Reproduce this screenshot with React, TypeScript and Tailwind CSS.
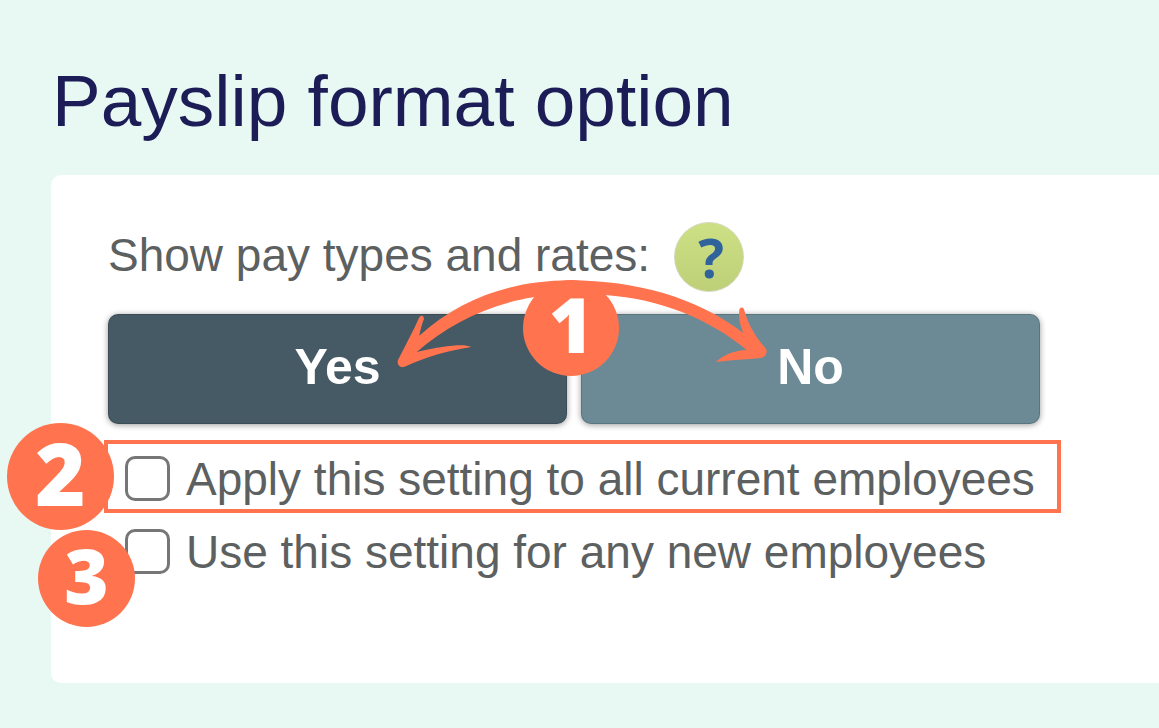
import { useState } from "react";
import clsx from "clsx";

const OPTIONS = [
  { label: "Yes", color: "bg-[#465a65]" },
  { label: "No", color: "bg-[#6c8a95]" },
];

function Badge({ children, className }: { children: string; className: string }) {
  return (
    <span
      className={clsx(
        "absolute z-10 flex items-center justify-center rounded-full bg-[#ff744e] pb-2 text-white font-['Open_Sans',sans-serif] font-extrabold leading-none pointer-events-none",
        className
      )}
    >
      {children}
    </span>
  );
}

// Double-headed arrow that joins the two options
function OptionArrow() {
  return (
    <svg
      viewBox="-18 54 1200 300"
      className="absolute z-10 left-1/2 -ml-[200px] -top-9 w-[400px] h-[100px] pointer-events-none"
      fill="#ff744e"
      aria-hidden="true"
    >
      <path d="M570 61C400 62 245 112 118 227C121 208 126 192 132 176C132 166 122 164 118 172C100 212 78 254 54 300C50 312 58 324 72 321C135 292 205 271 274 261C262 255 246 255 232 256C190 259 150 267 110 276C206 194 320 134 460 112C530 110 610 104 675 105C840 116 990 178 1100 270C1064 272 1036 281 1008 306C1050 301 1100 298 1142 294C1156 292 1164 278 1158 266C1122 226 1103 190 1092 148C1089 140 1080 141 1078 149C1075 172 1080 196 1090 219C950 112 770 62 570 61Z" />
    </svg>
  );
}

function CheckRow({ label, className }: { label: string; className: string }) {
  return (
    <label
      className={clsx("flex w-fit items-center gap-4 border-4 pt-1 pl-[17px] pr-[22px] h-[73px]", className)}
    >
      <input
        type="checkbox"
        className="w-[45px] h-[45px] shrink-0 appearance-none rounded-[10px] border-3 border-[#767676] bg-white checked:bg-[#465a65]"
      />
      <span>{label}</span>
    </label>
  );
}

export default function App() {
  const [selected, setSelected] = useState("Yes");

  return (
    <main className="min-h-screen overflow-hidden bg-[#e8f8f3] pt-[61px] pb-11 pl-[51px] font-['Liberation_Sans',Arial,sans-serif]">
      <h1 className="mb-[34px] pl-px text-[73px] leading-[80px] text-[#1c1d57]">Payslip format option</h1>

      <section className="rounded-l-[10px] bg-white pt-[47px] pb-[97px] pl-[53px] pr-6 text-[46px] leading-[52px] text-[#5c6060]">
        <div className="ml-1 mb-[22px] flex items-center gap-6">
          <span id="pay-types" className="pb-1">
            Show pay types and rates:
          </span>
          <button
            type="button"
            aria-label="Help"
            className="flex w-[70px] h-[70px] items-center justify-center rounded-full border border-[#d3d8bd] bg-linear-to-b from-[#cde084] to-[#bdd078] pl-1 font-['Open_Sans',sans-serif] text-[54px] font-bold leading-none text-[#30629c]"
          >
            ?
          </button>
        </div>

        {/* Yes / No */}
        <div
          role="group"
          aria-labelledby="pay-types"
          className="relative ml-1 mb-4 grid max-w-[932px] grid-cols-2 gap-[14px]"
        >
          {OPTIONS.map((o) => (
            <button
              key={o.label}
              type="button"
              aria-pressed={selected === o.label}
              onClick={() => setSelected(o.label)}
              className={clsx(
                "h-[110px] rounded-[10px] border border-black/15 pb-1 text-[50px] font-bold text-white shadow-[0_1px_6px_rgba(0,0,0,0.4)]",
                o.color
              )}
            >
              {o.label}
            </button>
          ))}
          <OptionArrow />
          <Badge className="left-1/2 -ml-[51px] -top-[34px] w-24 h-24 text-[76px]">1</Badge>
        </div>

        <div className="relative">
          <CheckRow label="Apply this setting to all current employees" className="border-[#ff744e]" />
          <Badge className="-left-[97px] -top-[17px] w-[107px] h-[107px] text-[86px]">2</Badge>
        </div>
        <div className="relative">
          <CheckRow label="Use this setting for any new employees" className="border-transparent" />
          <Badge className="-left-[66px] top-[17px] w-[97px] h-[97px] text-[76px]">3</Badge>
        </div>
      </section>
    </main>
  );
}
